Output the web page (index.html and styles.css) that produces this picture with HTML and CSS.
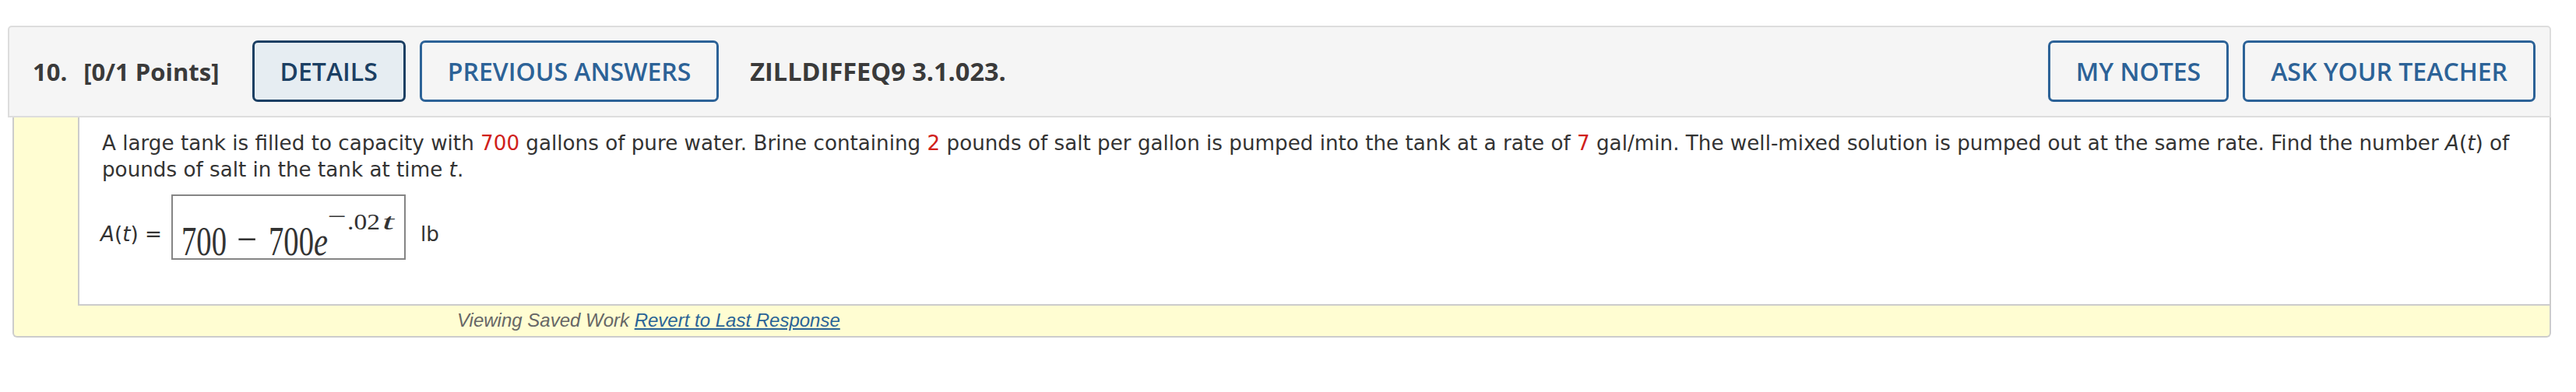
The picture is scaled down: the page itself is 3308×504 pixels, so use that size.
FILE: index.html
```html
<!DOCTYPE html>
<html lang="en">
<head>
<meta charset="utf-8">
<title>Question 10</title>
<link rel="stylesheet" href="styles.css">
</head>
<body>
<div class="question">
  <div class="q-header">
    <span class="q-num">10.</span>
    <span class="q-points">[0/1 Points]</span>
    <button class="btn btn-active">DETAILS</button>
    <button class="btn">PREVIOUS ANSWERS</button>
    <span class="q-code">ZILLDIFFEQ9 3.1.023.</span>
    <span class="spacer"></span>
    <button class="btn">MY NOTES</button>
    <button class="btn">ASK YOUR TEACHER</button>
  </div>
  <div class="q-body">
    <div class="q-content">
      <p class="q-text">A large tank is filled to capacity with <span class="num">700</span> gallons of pure water. Brine containing <span class="num">2</span> pounds of salt per gallon is pumped into the tank at a rate of <span class="num">7</span> gal/min. The well-mixed solution is pumped out at the same rate. Find the number <i>A</i>(<i>t</i>) of pounds of salt in the tank at time <i>t</i>.</p>
      <div class="answer-row">
        <span class="answer-label"><i>A</i>(<i>t</i>) =</span>
        <span class="answer-box">
          <svg class="math" width="297" height="80" viewBox="0 0 297 80" aria-label="700 - 700e^(-.02t)">
            <text x="11" y="76" font-size="52" textLength="58" lengthAdjust="spacingAndGlyphs">700</text>
            <text x="82" y="73" font-size="52" textLength="26" lengthAdjust="spacingAndGlyphs">−</text>
            <text x="123" y="76" font-size="52" textLength="58" lengthAdjust="spacingAndGlyphs">700</text>
            <text x="181" y="76" font-size="52" font-style="italic" textLength="18" lengthAdjust="spacingAndGlyphs">e</text>
            <text x="199" y="36" font-size="30" textLength="24" lengthAdjust="spacingAndGlyphs">−</text>
            <text x="224" y="43" font-size="30" textLength="42" lengthAdjust="spacingAndGlyphs">.02</text>
            <text x="269" y="43" font-size="30" font-style="italic" textLength="15" lengthAdjust="spacingAndGlyphs">t</text>
          </svg>
        </span>
        <span class="answer-unit">lb</span>
      </div>
    </div>
    <div class="q-footer">Viewing Saved Work <a href="#" class="revert">Revert to Last Response</a></div>
  </div>
</div>
</body>
</html>
```
FILE: styles.css
```css
html, body {
  margin: 0;
  padding: 0;
  background: #ffffff;
}

body {
  padding: 33px 32px 0 10px;
}

.question {
  color: #333333;
}

.q-header {
  display: flex;
  align-items: center;
  background: #f5f5f5;
  border: 2px solid #dddddd;
  border-radius: 5px 5px 0 0;
  padding: 17px 18px 18px 30px;
  font-family: "Open Sans", "Liberation Sans", sans-serif;
  color: #3a3a3a;
}

.q-num {
  font-weight: 700;
  font-size: 31px;
  margin-right: 21px;
}

.q-points {
  font-weight: 700;
  font-size: 31px;
  margin-right: 42px;
}

.q-code {
  font-weight: 700;
  font-size: 32.5px;
  margin-left: 22px;
}

.spacer {
  flex: 1;
}

.btn {
  font-family: "Open Sans", "Liberation Sans", sans-serif;
  font-weight: 600;
  font-size: 32px;
  height: 79px;
  padding: 0 33px;
  border: 3px solid #2c6297;
  border-radius: 7px;
  background: transparent;
  color: #2c6297;
  margin-right: 18px;
}

.btn:last-child {
  margin-right: 0;
}

.btn-active {
  border-color: #1b3f63;
  background: #e6edf2;
  color: #1b3f63;
}

.q-body {
  margin-left: 6px;
  background: #fffdd2;
  border: 2px solid #cccccc;
  border-top: none;
  border-radius: 0 0 6px 6px;
}

.q-content {
  margin-left: 82px;
  background: #ffffff;
  border-left: 2px solid #cccccc;
  border-bottom: 2px solid #cccccc;
  padding: 16px 12px 57px 29px;
  font-family: Verdana, "DejaVu Sans", sans-serif;
  font-size: 26.2px;
  line-height: 34px;
  color: #333333;
}

.q-text {
  margin: 0;
}

.num {
  color: #d0201a;
}

.answer-row {
  display: flex;
  align-items: flex-start;
  margin-top: 15px;
}

.answer-label {
  margin-top: 34px;
  margin-left: -2px;
  margin-right: 12px;
}

.answer-box {
  display: block;
  width: 301px;
  height: 84px;
  box-sizing: border-box;
  border: 2px solid #858585;
  background: #ffffff;
}

.math {
  display: block;
  overflow: visible;
  font-family: "Liberation Serif", "Times New Roman", serif;
  fill: #333333;
}

.answer-unit {
  margin-top: 34px;
  margin-left: 19px;
}

.q-footer {
  padding: 0 0 2px 569px;
  font-family: Arial, "Liberation Sans", sans-serif;
  font-style: italic;
  font-size: 24px;
  line-height: 37px;
  color: #666666;
}

.revert {
  color: #2a6496;
  text-decoration: underline;
}
```
